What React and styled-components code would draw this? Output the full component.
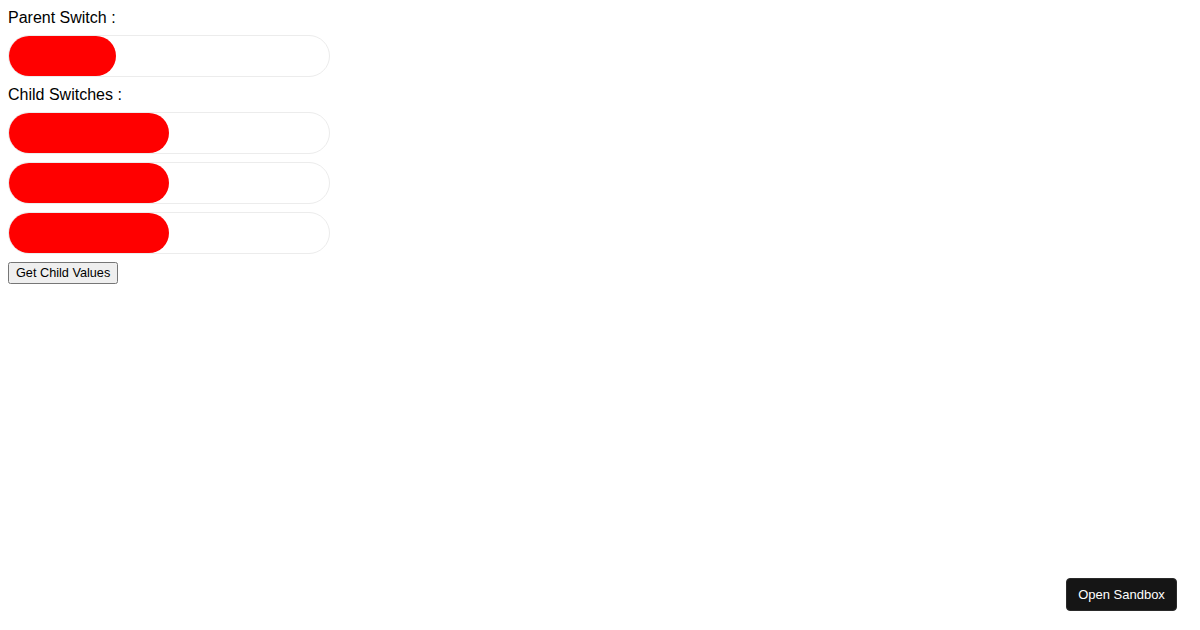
import React from "react";
import styled, { createGlobalStyle } from "styled-components";

const GlobalStyle = createGlobalStyle`
  html, body { background: #ffffff; }
  body {
    margin: 8px;
    font-family: "Liberation Sans", Arial, sans-serif;
    font-size: 16px;
    color: #000000;
  }
`;

const Column = styled.div`
  display: flex;
  flex-direction: column;
  align-items: flex-start;
  gap: 8px;
`;

const Label = styled.div`
  line-height: 19px;
  font-size: 16px;
`;

const Track = styled.div`
  box-sizing: border-box;
  width: 322px;
  height: 42px;
  border: 1px solid #ececec;
  border-radius: 21px;
  background: #ffffff;
  display: flex;
  align-items: stretch;
`;

const Knob = styled.div`
  width: ${(p) => p.$fill}%;
  background: #ff0000;
  border-radius: 20px;
`;

const NativeButton = styled.button`
  font-family: "Liberation Sans", Arial, sans-serif;
  font-size: 12.7px;
  height: 22px;
  padding: 1px 6px;
  color: #000;
`;

const SandboxButton = styled.button`
  position: fixed;
  right: 23px;
  bottom: 19px;
  width: 111px;
  height: 33px;
  border: 1px solid #2a2a2a;
  border-radius: 4px;
  background: #151515;
  color: #ffffff;
  font-family: "Liberation Sans", Arial, sans-serif;
  font-size: 13px;
  padding: 0;
  cursor: pointer;
`;

const Switch = ({ fill }) => (
  <Track>
    <Knob $fill={fill} />
  </Track>
);

export default function App() {
  return (
    <>
      <GlobalStyle />
      <Column>
        <Label>Parent Switch :</Label>
        <Switch fill={33.4} />
        <Label>Child Switches :</Label>
        <Switch fill={50} />
        <Switch fill={50} />
        <Switch fill={50} />
        <NativeButton>Get Child Values</NativeButton>
      </Column>
      <SandboxButton>Open Sandbox</SandboxButton>
    </>
  );
}
